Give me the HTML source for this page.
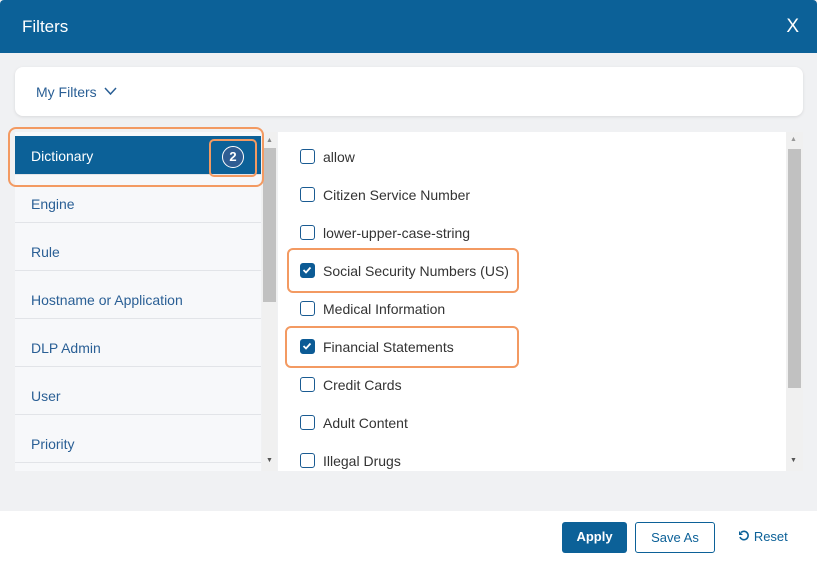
<!DOCTYPE html>
<html><head><style>
*{box-sizing:border-box;margin:0;padding:0}
body{width:817px;height:561px;overflow:hidden;background:#f0f1f3;font-family:"Liberation Sans",sans-serif;position:relative}
.hdr{position:absolute;left:0;top:0;width:817px;height:53px;background:#0c6198;color:#fff;border-radius:4px 4px 0 0}
.hdr .t{position:absolute;left:22px;top:17px;font-size:17px}
.hdr .x{position:absolute;right:18px;top:16px;font-size:19px}
.card{position:absolute;left:15px;top:67px;width:788px;height:49px;background:#fff;border-radius:8px;box-shadow:0 1px 3px rgba(0,0,0,.1)}
.card span{position:absolute;left:21px;top:17px;font-size:14px;color:#2a5f95}
.left{position:absolute;left:15px;top:132px;width:246px;height:339px;background:#f7f8fa;overflow:hidden}
.row{position:absolute;left:0;width:246px;height:48px;border-bottom:1px solid #e2e4e8;font-size:14px;color:#2a5f95;padding:21px 0 0 16px}
.sel{background:#0c6198;color:#fff}
.sb{position:absolute;background:#f0f0f0}
.thumb{position:absolute;background:#c1c1c1}
.right{position:absolute;left:278px;top:132px;width:508px;height:339px;background:#fff}
.it{position:absolute;left:22px;font-size:14px;color:#333}
.cb{position:absolute;left:0;top:0;width:15px;height:15px;border:1.5px solid #1a5b92;border-radius:3px}
.cb.on{background:#0c5b95;border-color:#0c5b95}
.it span{position:absolute;left:23px;top:0px;white-space:nowrap}
.ob{position:absolute;border:2px solid #f39a62;border-radius:6px}
.foot{position:absolute;left:0;top:511px;width:817px;height:50px;background:#fff}
.btn{position:absolute;top:522px;height:31px;border-radius:3px;font-size:13px;text-align:center;line-height:29px}
</style></head><body>
<div class="hdr"><div class="t">Filters</div><div class="x">X</div></div>
<div class="card"><span>My Filters &nbsp;<svg width="13" height="9" viewBox="0 0 13 9" style="vertical-align:1px"><path d="M1 1l5.5 6L12 1" fill="none" stroke="#2a5f95" stroke-width="1.5"/></svg></span></div>
<div class="left">
<div class="row sel" style="top:4px;height:39px;padding-top:12px">Dictionary</div>
<div class="row" style="top:43px">Engine</div>
<div class="row" style="top:91px">Rule</div>
<div class="row" style="top:139px">Hostname or Application</div>
<div class="row" style="top:187px">DLP Admin</div>
<div class="row" style="top:235px">User</div>
<div class="row" style="top:283px">Priority</div>
</div>
<div class="sb" style="left:262px;top:132px;width:15px;height:339px"></div>
<div class="thumb" style="left:263px;top:148px;width:13px;height:154px"></div>
<div style="position:absolute;left:266px;top:137px;font-size:7px;color:#888">▲</div>
<div style="position:absolute;left:266px;top:457px;font-size:7px;color:#555">▼</div>
<div style="position:absolute;left:222px;top:146px;width:22px;height:22px;border-radius:50%;background:#2f5d93;border:1.5px solid #fff;color:#fff;font-size:13px;font-weight:bold;text-align:center;line-height:19px">2</div>
<div class="ob" style="left:8px;top:127px;width:256px;height:60px;border-radius:8px"></div>
<div class="ob" style="left:209px;top:139px;width:48px;height:38px;border-radius:5px"></div>
<div class="right">
<div class="it" style="top:17px"><div class="cb"></div><span>allow</span></div>
<div class="it" style="top:55px"><div class="cb"></div><span>Citizen Service Number</span></div>
<div class="it" style="top:93px"><div class="cb"></div><span>lower-upper-case-string</span></div>
<div class="it" style="top:131px"><div class="cb on"><svg width="12" height="12" viewBox="0 0 12 12" style="position:absolute;left:0;top:0"><path d="M2.5 6l2.5 2.5 4.5-5" fill="none" stroke="#fff" stroke-width="1.8"/></svg></div><span>Social Security Numbers (US)</span></div>
<div class="it" style="top:169px"><div class="cb"></div><span>Medical Information</span></div>
<div class="it" style="top:207px"><div class="cb on"><svg width="12" height="12" viewBox="0 0 12 12" style="position:absolute;left:0;top:0"><path d="M2.5 6l2.5 2.5 4.5-5" fill="none" stroke="#fff" stroke-width="1.8"/></svg></div><span>Financial Statements</span></div>
<div class="it" style="top:245px"><div class="cb"></div><span>Credit Cards</span></div>
<div class="it" style="top:283px"><div class="cb"></div><span>Adult Content</span></div>
<div class="it" style="top:321px"><div class="cb"></div><span>Illegal Drugs</span></div>
</div>
<div class="sb" style="left:786px;top:132px;width:17px;height:339px"></div>
<div class="thumb" style="left:788px;top:149px;width:13px;height:239px"></div>
<div style="position:absolute;left:790px;top:136px;font-size:7px;color:#999">▲</div>
<div style="position:absolute;left:790px;top:457px;font-size:7px;color:#555">▼</div>
<div class="ob" style="left:287px;top:248px;width:232px;height:45px"></div>
<div class="ob" style="left:285px;top:326px;width:234px;height:42px"></div>
<div class="foot"></div>
<div class="btn" style="left:562px;width:65px;background:#0c6198;color:#fff;font-weight:bold">Apply</div>
<div class="btn" style="left:635px;width:80px;border:1px solid #0c6198;color:#0c6198;background:#fff">Save As</div>
<div class="btn" style="left:730px;width:66px;color:#0c6198">
<svg width="12" height="12" viewBox="0 0 12 12" style="vertical-align:-1px"><path d="M3 2.5A4.2 4.2 0 1 1 2 7" fill="none" stroke="#0c6198" stroke-width="1.6"/><path d="M1 1v4h4z" fill="#0c6198"/></svg> Reset</div>
</body></html>
